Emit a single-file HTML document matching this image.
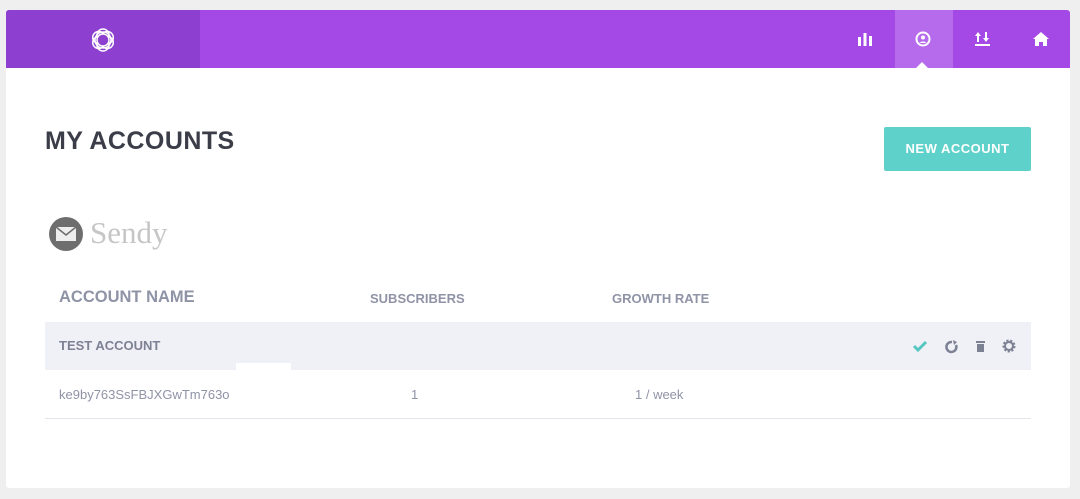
<!DOCTYPE html>
<html><head><style>
body{margin:0;width:1080px;height:499px;background:#efefef;font-family:"Liberation Sans",sans-serif;position:relative;overflow:hidden}
.card{position:absolute;left:6px;top:10px;width:1064px;height:478px;background:#fff;border-radius:3px;overflow:hidden}
.hdr{position:absolute;left:0;top:0;width:1064px;height:58px;background:#a448e6}
.logo{position:absolute;left:0;top:0;width:194px;height:58px;background:#8d3fcf}
.act{position:absolute;left:889px;top:0;width:58px;height:58px;background:#b66aec}
.tri{position:absolute;left:909px;top:52px;width:0;height:0;border-left:7px solid transparent;border-right:7px solid transparent;border-bottom:7px solid #fff}
.t{position:absolute;white-space:nowrap}
</style></head><body>
<div class="card">
<div class="hdr"><div class="logo">
<svg style="position:absolute;left:81px;top:14px" width="32" height="32" viewBox="0 0 32 32" fill="none" stroke="#fff" stroke-width="1.5">
<circle cx="16" cy="16" r="8"/><circle cx="16" cy="11" r="6"/><circle cx="20.3" cy="13.5" r="6"/><circle cx="20.3" cy="18.5" r="6"/><circle cx="16" cy="21" r="6"/><circle cx="11.7" cy="18.5" r="6"/><circle cx="11.7" cy="13.5" r="6"/><circle cx="16" cy="16" r="6" fill="#8d3fcf" stroke="none"/><circle cx="16" cy="16" r="6"/></svg>
</div>
<div class="act"></div><div class="tri"></div>
<svg style="position:absolute;left:851px;top:21px" width="16" height="16"><rect x="1" y="6" width="3" height="9" fill="#fff"/><rect x="6.5" y="2" width="3" height="13" fill="#fff"/><rect x="12" y="5" width="3" height="10" fill="#fff"/></svg>
<svg style="position:absolute;left:909px;top:21px" width="16" height="16"><circle cx="8" cy="8" r="6.5" fill="none" stroke="#fff" stroke-width="2"/><circle cx="8" cy="6.5" r="2" fill="#fff"/><path d="M4.5 12a4 3 0 0 1 7 0z" fill="#fff"/></svg>
<svg style="position:absolute;left:968px;top:20px" width="18" height="18"><path d="M4 2l-3 4h2v6h2V6h2z M12 12l3-4h-2V2h-2v6H9z" fill="#fff"/><rect x="1" y="14" width="15" height="2" fill="#fff"/></svg>
<svg style="position:absolute;left:1026px;top:20px" width="18" height="18"><path d="M9 2L1 9h2v7h4v-4h4v4h4V9h2z" fill="#fff"/></svg>
</div>
<div class="t" style="left:39px;top:117px;font-size:25px;font-weight:bold;color:#3b3d48;letter-spacing:0.45px">MY ACCOUNTS</div>
<div class="t" style="left:878px;top:117px;width:147px;height:44px;background:#5fd1cb;border-radius:2px;color:#fff;font-size:13px;font-weight:bold;text-align:center;line-height:44px;letter-spacing:0.5px">NEW ACCOUNT</div>
<svg style="position:absolute;left:42px;top:206px" width="36" height="36"><circle cx="18" cy="18" r="17" fill="#6e6e6e"/><rect x="8" y="11" width="20" height="14" fill="#eee"/><path d="M8 11l10 8 10-8" fill="none" stroke="#6e6e6e" stroke-width="1.5"/></svg>
<div class="t" style="left:84px;top:205px;font-family:'Liberation Serif',serif;font-size:31px;color:#c6c6c6">Sendy</div>
<div class="t" style="left:53px;top:278px;font-size:16.5px;font-weight:bold;color:#8f93a6">ACCOUNT NAME</div>
<div class="t" style="left:364px;top:281px;font-size:13px;font-weight:bold;color:#8f93a6">SUBSCRIBERS</div>
<div class="t" style="left:606px;top:281px;font-size:13px;font-weight:bold;color:#8f93a6">GROWTH RATE</div>
<div style="position:absolute;left:39px;top:312px;width:986px;height:48px;background:#f0f1f6"></div>
<div style="position:absolute;left:230px;top:353px;width:55px;height:8px;background:#fff"></div>
<div class="t" style="left:53px;top:328px;font-size:13px;font-weight:bold;color:#7d8194">TEST ACCOUNT</div>
<svg style="position:absolute;left:906px;top:328px" width="110" height="16"><path d="M2 8l4 4 8-8" fill="none" stroke="#55c6c0" stroke-width="3"/><path d="M40 4a5 5 0 1 0 4 3" fill="none" stroke="#7d8194" stroke-width="2.5"/><path d="M41 2l4 2-3 3z" fill="#7d8194"/><rect x="64" y="3" width="9" height="2" fill="#7d8194"/><rect x="65" y="6" width="7" height="8" fill="#7d8194"/><circle cx="97" cy="8" r="5" fill="none" stroke="#7d8194" stroke-width="3" stroke-dasharray="2 1.5"/><circle cx="97" cy="8" r="4" fill="none" stroke="#7d8194" stroke-width="2"/></svg>
<div class="t" style="left:53px;top:377px;font-size:13px;color:#8f93a6">ke9by763SsFBJXGwTm763o</div>
<div class="t" style="left:405px;top:377px;font-size:13px;color:#8f93a6">1</div>
<div class="t" style="left:629px;top:377px;font-size:13px;color:#8f93a6">1 / week</div>
<div style="position:absolute;left:39px;top:408px;width:986px;height:1px;background:#e4e5ea"></div>
</div>
</body></html>
